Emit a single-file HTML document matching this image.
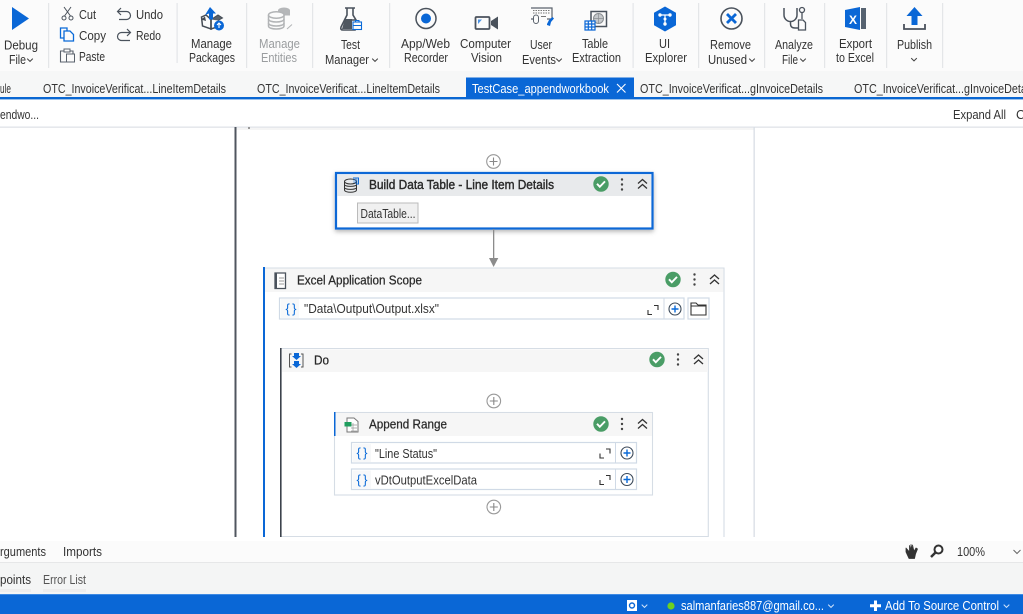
<!DOCTYPE html>
<html><head><meta charset="utf-8"><title>Studio</title>
<style>
html,body{margin:0;padding:0;background:#fff;width:1023px;height:614px;overflow:hidden}
svg{display:block}
text{font-family:"Liberation Sans",sans-serif;font-size:12.5px;fill:#333;}
.s{fill:#444b55}
.b{fill:#0067d6}
.n{fill:none;stroke:#4a525c;stroke-width:1.2}
.nb{fill:none;stroke:#0a6ad8;stroke-width:1.3}
.g text{fill:#9a9d9f}
.w text{fill:#fff}
.sb{stroke:#2a2a2a;stroke-width:.4;fill:#2a2a2a}
</style></head><body>
<svg width="1023" height="614" viewBox="0 0 1023 614" xmlns="http://www.w3.org/2000/svg">
<defs>
<filter id="sh" x="-5%" y="-15%" width="110%" height="135%"><feDropShadow dx="0" dy="2" stdDeviation="2.5" flood-color="#000" flood-opacity=".3"/></filter>
<g id="ok"><circle r="7.7" fill="#4a9d66"/><path d="M-4-.2 -1.2 2.8 4-2.6" fill="none" stroke="#fff" stroke-width="1.9"/></g>
<g id="dots" fill="#444"><circle cy="-5" r="1.2"/><circle r="1.2"/><circle cy="5" r="1.2"/></g>
<g id="chev" fill="none" stroke="#333" stroke-width="1.3"><path d="M-4.5-1 0-5 4.5-1"/><path d="M-4.5 4 0 0 4.5 4"/></g>
<g id="plus"><circle r="6.8" fill="#fff" stroke="#999" stroke-width="1.1"/><path d="M-4 0H4M0-4V4" stroke="#888" stroke-width="1.1"/></g>
<g id="bplus"><circle r="6" fill="#fff" stroke="#3c4a5a" stroke-width="1.1"/><path d="M-3.5 0H3.5M0-3.5V3.5" stroke="#0a6ad8" stroke-width="1.4"/></g>
<g id="exp" fill="none" stroke="#333" stroke-width="1.1"><path d="M-5 0V4.5H-1"/><path d="M1-4.5H5V0"/></g>
<path id="cv" d="M-2.8-1.4 0 1.4 2.8-1.4" fill="none" stroke="#444" stroke-width="1"/>
<path id="cvw" d="M-2.8-1.4 0 1.4 2.8-1.4" fill="none" stroke="#cfe2fa" stroke-width="1"/>
</defs>

<rect width="1023" height="614" fill="#fff"/>
<!-- ribbon -->
<rect width="1023" height="71" fill="#fbfbfb"/>
<rect y="71" width="1023" height="26" fill="#f6f7f7"/>
<rect y="97" width="1023" height="2.4" fill="#0a67d2"/>
<g fill="#e4e6e8">
<rect x="48" y="3" width="1.2" height="65"/><rect x="176.500" y="3" width="1.2" height="60"/><rect x="246" y="3" width="1.2" height="65"/><rect x="312" y="3" width="1.200" height="65"/><rect x="389" y="3" width="1.2" height="65"/><rect x="632.500" y="3" width="1.2" height="65"/><rect x="698" y="3" width="1.2" height="65"/><rect x="764" y="3" width="1.2" height="65"/><rect x="824" y="3" width="1.2" height="65"/><rect x="886" y="3" width="1.2" height="65"/><rect x="942" y="3" width="1.2" height="65"/>
</g>

<!-- ribbon icons -->
<path d="M12 7 29 18.500 12 30Z" fill="#0a67d6"/>
<!-- cut -->
<g fill="none" stroke="#4a525c" stroke-width="1"><path d="M64 7 70.500 16M71 7 64.500 16"/><circle cx="64" cy="18" r="2"/><circle cx="71" cy="18" r="2"/></g>
<!-- copy -->
<path d="M60.500 28H67V38H60.500Z" fill="none" stroke="#0a6ad8" stroke-width="1.300"/>
<path d="M64 31H70L73.500 34.500V41H64Z" fill="#fbfbfb" stroke="#0a6ad8" stroke-width="1.300"/>
<!-- paste -->
<path d="M60.500 51H73V62H60.500Z" fill="none" stroke="#5a626c" stroke-width="1.100"/>
<path d="M64 49H70V52H64Z" fill="#fbfbfb" stroke="#5a626c"/>
<path d="M66.500 54H74.500V62H66.500Z" fill="#fbfbfb" stroke="#5a626c"/>
<!-- undo redo -->
<path d="M121 8 117.500 11.500 121 15M118 11.500H126.500A4 4 0 0 1 126.500 19.500H119" class="n"/>
<path d="M127 29 130.500 32.500 127 36M130 32.500H121.500A4 4 0 0 0 121.500 40.500H130" class="n"/>
<!-- manage packages -->
<path d="M201.500 17 206 15 211 19.500 211 29 202.500 26Z" fill="#fbfbfb" stroke="#454c55" stroke-width="1.500"/>
<path d="M211 19.500 218 15 222.500 18 218 20.500" fill="#5a626c" stroke="#454c55" stroke-width="1"/>
<path d="M211 19.500V29L217 27" fill="none" stroke="#454c55" stroke-width="1.500"/>
<path d="M205 16.500 201 19.500 206 21Z" fill="#454c55"/>
<path d="M210 7 216 13.500H213V19.500H209V13.500L205 15Z" fill="#0a67d6"/>
<circle cx="219" cy="25.500" r="5" fill="#0a67d6"/><path d="M219 28V23.500M217 25 219 23 221 25" stroke="#fff" fill="none" stroke-width="1.100"/>
<!-- entities -->
<ellipse cx="284" cy="10.500" rx="6" ry="3" fill="#b5b7b9"/><rect x="278" y="10.500" width="12" height="5" fill="#b5b7b9"/>
<g fill="#fbfbfb" stroke="#b2b4b6" stroke-width="1.500"><path d="M268.500 15V26C268.500 30 284 30 284 26V15"/><ellipse cx="276.300" cy="15" rx="7.800" ry="3.300"/><path d="M268.500 19C268.500 23 284 23 284 19M268.500 23C268.500 27 284 27 284 23" fill="none"/></g>
<path d="M287 29 292 24.500" stroke="#b2b4b6" fill="none"/>
<!-- test manager -->
<path d="M345 8H355M347 8V15L341 27Q340 30 343 30H355V24" fill="none" stroke="#4a525c" stroke-width="1.600"/>
<path d="M353 8V15L356 20H350" fill="none" stroke="#4a525c" stroke-width="1.600"/>
<path d="M345 19H352V29H342Z" fill="#4f5760"/>
<rect x="353" y="22" width="8.500" height="7.500" fill="#fbfbfb" stroke="#0a6ad8" stroke-width="1.100"/><path d="M353 25.500H361.500M355.500 22V20.500H359V22" stroke="#0a6ad8" fill="none"/>
<!-- recorder -->
<circle cx="426" cy="18.500" r="10" fill="#fbfbfb" stroke="#4a525c" stroke-width="1.500"/><circle cx="426" cy="18.500" r="5" fill="#0a67d6"/>
<!-- camera -->
<rect x="475.500" y="17" width="14" height="12" rx="1" fill="#fbfbfb" stroke="#4a525c" stroke-width="1.800"/><path d="M491 21 498 16.500V29.500L491 25Z" fill="#4a525c"/><path d="M478 24 482 19.500H478Z" fill="#4b93e5"/>
<!-- user events -->
<path d="M531 8H552V19H547M537 19H531Z" fill="none" stroke="#5a626c" stroke-width="1.200"/>
<path d="M533 10.500H550M533 13H550" stroke="#777" stroke-width="1" stroke-dasharray="1.500 1"/><path d="M541 16.500H546" stroke="#777"/>
<rect x="533.500" y="15" width="5" height="8.500" rx="2.500" fill="#fbfbfb" stroke="#5a626c"/>
<path d="M547 24 549 20 552.500 17 554 18.500 551 22 550 26 547 25Z" fill="#0a67d6"/>
<!-- table extraction -->
<rect x="591" y="11.500" width="15.500" height="15" fill="#fbfbfb" stroke="#4a525c" stroke-width="1.500"/>
<circle cx="598.500" cy="18.500" r="5" fill="#c5c8cb" stroke="#8a8e92"/><path d="M593.500 18.500H603.500M598.500 13.500V23.500" stroke="#8a8e92" stroke-width=".7"/>
<rect x="584.500" y="20.500" width="11" height="10" fill="#fbfbfb"/><path d="M585 21H595V30H585ZM585 24H595M585 27H595M588.300 21V30M591.700 21V30" fill="none" stroke="#0a67d6" stroke-width="1.200"/>
<!-- ui explorer -->
<path d="M665 7 675.500 13V25L665 31 654.500 25V13Z" fill="#0a67d6" stroke="#0a67d6" stroke-linejoin="round"/>
<path d="M660 15H670M665 15V24M658.500 15H660M670 15H671.500" stroke="#fff" stroke-width="1.200"/><circle cx="660" cy="15" r="1.700" fill="#fff"/><circle cx="670" cy="15" r="1.700" fill="#fff"/><circle cx="665" cy="19" r="1.500" fill="#fff"/><circle cx="665" cy="24" r="1.700" fill="#fff"/>
<!-- remove unused -->
<circle cx="731.500" cy="18.500" r="10.500" fill="#fbfbfb" stroke="#4a525c" stroke-width="1.600"/><path d="M727 14 736 23M736 14 727 23" stroke="#0a67d6" stroke-width="2.800"/>
<!-- analyze -->
<path d="M784 8V15A6.500 6.500 0 0 0 797 15V8M790.500 21.500V24Q790.500 28 795 28H798" fill="none" stroke="#4a525c" stroke-width="1.500"/>
<circle cx="802" cy="10" r="2.500" fill="none" stroke="#4a525c" stroke-width="1.300"/><path d="M802 12.500V19" stroke="#4a525c" stroke-width="1.300"/>
<path d="M798.500 20H803L805.500 22.500V30H798.500Z" fill="#fbfbfb" stroke="#4a525c" stroke-width="1.300"/>
<!-- excel -->
<path d="M845 10 860 7V30L845 27Z" fill="#0a67d6"/><rect x="861" y="8" width="5" height="21" fill="#566270"/>
<text x="849" y="24" style="font-size:12px;font-weight:bold;fill:#fff">X</text>
<!-- publish -->
<path d="M914.500 7 922.500 16H917.500V25H911.500V16H906.500Z" fill="#0a67d6"/><path d="M904 24V29H925V24" fill="none" stroke="#4a525c" stroke-width="1.800"/>

<!-- ribbon text -->
<text x="4" y="49.500" textLength="34" lengthAdjust="spacingAndGlyphs">Debug</text>
<text x="9" y="64" textLength="17" lengthAdjust="spacingAndGlyphs">File</text><use href="#cv" x="30" y="60"/>
<text x="79" y="19" textLength="17" lengthAdjust="spacingAndGlyphs">Cut</text>
<text x="79" y="40" textLength="27" lengthAdjust="spacingAndGlyphs">Copy</text>
<text x="79" y="61" textLength="26" lengthAdjust="spacingAndGlyphs">Paste</text>
<text x="136" y="19" textLength="27" lengthAdjust="spacingAndGlyphs">Undo</text>
<text x="136" y="40" textLength="25" lengthAdjust="spacingAndGlyphs">Redo</text>
<text x="191" y="48" textLength="41" lengthAdjust="spacingAndGlyphs">Manage</text>
<text x="189" y="62" textLength="46" lengthAdjust="spacingAndGlyphs">Packages</text>
<g class="g"><text x="259" y="48" textLength="41" lengthAdjust="spacingAndGlyphs">Manage</text>
<text x="261" y="62" textLength="36" lengthAdjust="spacingAndGlyphs">Entities</text></g>
<text x="341" y="49" textLength="19" lengthAdjust="spacingAndGlyphs">Test</text>
<text x="325" y="64" textLength="44" lengthAdjust="spacingAndGlyphs">Manager</text><use href="#cv" x="375" y="60"/>
<text x="401" y="48" textLength="49" lengthAdjust="spacingAndGlyphs">App/Web</text>
<text x="404" y="62" textLength="44" lengthAdjust="spacingAndGlyphs">Recorder</text>
<text x="460" y="48" textLength="51" lengthAdjust="spacingAndGlyphs">Computer</text>
<text x="471" y="62" textLength="31" lengthAdjust="spacingAndGlyphs">Vision</text>
<text x="530" y="49" textLength="22" lengthAdjust="spacingAndGlyphs">User</text>
<text x="522" y="64" textLength="34" lengthAdjust="spacingAndGlyphs">Events</text><use href="#cv" x="559" y="60"/>
<text x="582" y="48" textLength="26" lengthAdjust="spacingAndGlyphs">Table</text>
<text x="572" y="62" textLength="49" lengthAdjust="spacingAndGlyphs">Extraction</text>
<text x="659" y="48" textLength="11" lengthAdjust="spacingAndGlyphs">UI</text>
<text x="645" y="62" textLength="42" lengthAdjust="spacingAndGlyphs">Explorer</text>
<text x="710" y="49" textLength="41" lengthAdjust="spacingAndGlyphs">Remove</text>
<text x="708" y="64" textLength="39" lengthAdjust="spacingAndGlyphs">Unused</text><use href="#cv" x="752" y="60"/>
<text x="775" y="49" textLength="38" lengthAdjust="spacingAndGlyphs">Analyze</text>
<text x="782" y="64" textLength="16" lengthAdjust="spacingAndGlyphs">File</text><use href="#cv" x="803" y="60"/>
<text x="839" y="48" textLength="33" lengthAdjust="spacingAndGlyphs">Export</text>
<text x="836" y="62" textLength="38" lengthAdjust="spacingAndGlyphs">to Excel</text>
<text x="897" y="49" textLength="35" lengthAdjust="spacingAndGlyphs">Publish</text><use href="#cv" x="914" y="59.500"/>

<!-- tabs -->
<text x="0" y="93" textLength="11" lengthAdjust="spacingAndGlyphs">ule</text>
<text x="43" y="93" textLength="183" lengthAdjust="spacingAndGlyphs">OTC_InvoiceVerificat...LineItemDetails</text>
<text x="257" y="93" textLength="183" lengthAdjust="spacingAndGlyphs">OTC_InvoiceVerificat...LineItemDetails</text>
<rect x="466" y="77.500" width="168" height="21" fill="#0a67d6"/>
<g class="w"><text x="472" y="93" textLength="137" lengthAdjust="spacingAndGlyphs">TestCase_appendworkbook</text></g>
<path d="M617 84 625.500 92.500M625.500 84 617 92.500" stroke="#fff" stroke-width="1.100"/>
<text x="640" y="93" textLength="183" lengthAdjust="spacingAndGlyphs">OTC_InvoiceVerificat...gInvoiceDetails</text>
<text x="854" y="93" textLength="183" lengthAdjust="spacingAndGlyphs">OTC_InvoiceVerificat...gInvoiceDetails</text>

<!-- toolbar -->
<text x="0" y="119" textLength="39" lengthAdjust="spacingAndGlyphs">endwo...</text>
<text x="953" y="119" textLength="53" lengthAdjust="spacingAndGlyphs">Expand All</text>
<text x="1016" y="119">C</text>
<rect y="126.500" width="1023" height="1.300" fill="#dfe3e8"/>

<!-- canvas -->
<rect x="234.500" y="127" width="2" height="410" fill="#50565f"/>
<rect x="753.500" y="127" width="1.300" height="410" fill="#d8dee5"/>
<rect x="236.500" y="128" width="517" height="2" fill="#f5f5f5"/>
<rect x="248" y="127" width="2" height="2" fill="#999"/>
<use href="#plus" x="493.500" y="161.500"/>

<!-- build data table -->
<rect x="336" y="173" width="316.500" height="55.500" fill="#fff" stroke="#0a67d6" stroke-width="2.200" filter="url(#sh)"/>
<rect x="337.500" y="174.500" width="313.500" height="21.500" fill="#e8eaec"/>
<g fill="none" stroke="#333" stroke-width="1"><ellipse cx="350.500" cy="181.500" rx="6" ry="2.500" fill="#e8eaec"/><path d="M344.500 181.500V190C344.500 193 356.500 193 356.500 190V181.500M344.500 184.500C344.500 187 356.500 187 356.500 184.500M344.500 187.500C344.500 190 356.500 190 356.500 187.500"/></g>
<path d="M353 178H358.500V184H356" fill="none" stroke="#0a6ad8"/><path d="M353 180H358.500M353 182H358.500M356 178V184" stroke="#0a6ad8" stroke-width=".6"/>
<text x="369" y="189" textLength="185" lengthAdjust="spacingAndGlyphs" class="sb">Build Data Table - Line Item Details</text>
<use href="#ok" x="601" y="184"/><use href="#dots" x="622" y="184.500"/><use href="#chev" x="642.500" y="184.500"/>
<rect x="357.500" y="203" width="60.500" height="20" fill="#f0f0f0" stroke="#bbb"/>
<text x="360.500" y="218" textLength="55" lengthAdjust="spacingAndGlyphs">DataTable...</text>

<!-- arrow -->
<rect x="493" y="229" width="1.300" height="31" fill="#8c8c8c"/><path d="M489 258H498.300L493.600 267Z" fill="#8c8c8c"/>

<!-- excel scope -->
<path d="M264 268H724V537" fill="none" stroke="#d6dde5" stroke-width="1.100"/>
<rect x="265" y="268.500" width="458.500" height="23.500" fill="#f6f6f6"/>
<rect x="263" y="267" width="2" height="270" fill="#0a67d6"/>
<path d="M275 273H285.500V288.500H275Z" fill="#fff" stroke="#4a525c" stroke-width="1.300"/><rect x="274.500" y="273" width="2.500" height="15.500" fill="#4a525c"/><path d="M279 278H284M279 281H284M279 284H284" stroke="#777" stroke-width=".8"/>
<text x="297" y="284.500" textLength="125" lengthAdjust="spacingAndGlyphs" class="sb" style="stroke-width:.25">Excel Application Scope</text>
<use href="#ok" x="673" y="279.500"/><use href="#dots" x="694.500" y="279.500"/><use href="#chev" x="714.500" y="280"/>
<rect x="279.500" y="298" width="404.500" height="21" fill="#fff" stroke="#d0dae6" stroke-width="1.200"/>
<rect x="281" y="299" width="18" height="19" fill="#f7f8f9"/>
<path d="M664 298V319" stroke="#d0dae6"/>
<text x="285.500" y="313" style="fill:#0a6ad8;font-size:13px" textLength="11" lengthAdjust="spacing">{}</text>
<text x="304" y="313" textLength="135" lengthAdjust="spacingAndGlyphs">"Data\Output\Output.xlsx"</text>
<use href="#exp" x="653" y="310"/><use href="#bplus" x="675" y="309"/>
<rect x="688" y="298" width="21" height="21" fill="#fff" stroke="#d0dae6" stroke-width="1.200"/>
<path d="M691 303H696L698 305H706V315H691Z" fill="none" stroke="#333" stroke-width="1.100"/><path d="M691 306H706" stroke="#333"/>

<!-- do -->
<path d="M281 348.500H708.300V536.500H281" fill="none" stroke="#d6dde5" stroke-width="1.100"/>
<rect x="282" y="349.500" width="426" height="22.500" fill="#f6f6f6"/>
<rect x="280" y="348" width="1.600" height="189" fill="#3d434c"/>
<path d="M291.500 354H289.500V367H291.500M301 354H303V367H301" fill="none" stroke="#555" stroke-width="1"/>
<path d="M294 353H299V356H301L296.500 360 292 356H294Z" fill="#0a67d6"/><path d="M294 361H299V364H301L296.500 368 292 364H294Z" fill="#0a67d6"/>
<text x="314" y="364.500" textLength="15" lengthAdjust="spacingAndGlyphs" class="sb" style="stroke-width:.25">Do</text>
<use href="#ok" x="657" y="359.500"/><use href="#dots" x="678" y="359.500"/><use href="#chev" x="698.500" y="360"/>
<use href="#plus" x="493.800" y="401"/>

<!-- append range -->
<rect x="334.500" y="412.500" width="318" height="82.500" fill="#fff" stroke="#d6dde5" stroke-width="1.100"/>
<rect x="335" y="413" width="317" height="23" fill="#f6f6f6"/>
<rect x="334" y="412" width="1.500" height="24" fill="#0a67d6"/>
<path d="M347 418H354L358 421.500V432H347Z" fill="#fff" stroke="#777"/><path d="M351 425H357M351 428H357M351 431H357M353 423V432" stroke="#999" stroke-width=".7"/><rect x="344.500" y="422" width="7" height="4.500" fill="#1f9e5e"/>
<text x="369" y="428.500" textLength="78" lengthAdjust="spacingAndGlyphs" class="sb" style="stroke-width:.25">Append Range</text>
<use href="#ok" x="601" y="424"/><use href="#dots" x="622" y="424"/><use href="#chev" x="642.500" y="424.500"/>

<rect x="351.500" y="442.500" width="285" height="20.500" fill="#fff" stroke="#d0dae6" stroke-width="1.200"/><path d="M615.500 442.500V463" stroke="#d0dae6"/>
<rect x="353" y="444" width="18" height="18" fill="#f7f8f9"/>
<text x="356.500" y="457" style="fill:#0a6ad8;font-size:13px" textLength="11" lengthAdjust="spacing">{}</text>
<text x="375" y="458" textLength="62" lengthAdjust="spacingAndGlyphs">"Line Status"</text>
<use href="#exp" x="605" y="453.500"/><use href="#bplus" x="627" y="453"/>

<rect x="351.500" y="469" width="285" height="20.500" fill="#fff" stroke="#d0dae6" stroke-width="1.200"/><path d="M615.500 469V489.500" stroke="#d0dae6"/>
<rect x="353" y="470.500" width="18" height="18" fill="#f7f8f9"/>
<text x="356.500" y="484" style="fill:#0a6ad8;font-size:13px" textLength="11" lengthAdjust="spacing">{}</text>
<text x="375" y="484.500" textLength="102" lengthAdjust="spacingAndGlyphs">vDtOutputExcelData</text>
<use href="#exp" x="605" y="480"/><use href="#bplus" x="627" y="479.500"/>
<use href="#plus" x="493.800" y="507"/>

<!-- bottom bars -->
<rect y="537" width="1023" height="5" fill="#fff"/>
<rect y="541" width="1023" height="21" fill="#fbfbfb"/>
<rect y="562" width="1023" height="1.300" fill="#e6e7e8"/>
<rect y="563" width="1023" height="31" fill="#f4f5f5"/>
<rect y="589" width="31" height="3" fill="#ededed"/><rect x="43" y="589" width="43" height="3" fill="#ededed"/>
<text x="0" y="556" textLength="46" lengthAdjust="spacingAndGlyphs">rguments</text>
<text x="63" y="556" textLength="39" lengthAdjust="spacingAndGlyphs">Imports</text>
<text x="0" y="584" textLength="31" lengthAdjust="spacingAndGlyphs">points</text>
<text x="43" y="584" textLength="43" lengthAdjust="spacingAndGlyphs" style="fill:#555">Error List</text>
<!-- hand -->
<path d="M906 548 909.500 552V545.500L911 551V544.500L912.500 551V545L914 551.500 916 548 917.500 549 915.500 554 914.500 558.500H909L906 552Z" fill="#333" stroke="#333" stroke-width=".8" stroke-linejoin="round"/>
<!-- zoom -->
<circle cx="938.500" cy="549.500" r="4" fill="#fff" stroke="#333" stroke-width="2"/><path d="M935.500 552.500 931 557" stroke="#333" stroke-width="2.500"/>
<text x="957" y="556" textLength="28" lengthAdjust="spacingAndGlyphs">100%</text>
<path d="M1013.500 550 1017 553.500 1020.500 550" fill="none" stroke="#666" stroke-width="1"/>

<!-- status -->
<rect y="594" width="1023" height="20" fill="#0a67d6"/>
<rect y="594" width="1023" height="1" fill="#3e8ae3"/>
<rect x="627" y="600" width="10" height="11" fill="#fff"/><circle cx="632" cy="605.500" r="2.500" fill="none" stroke="#0a67d6" stroke-width="1.400"/>
<use href="#cvw" x="644.500" y="606"/>
<circle cx="671" cy="606" r="3.600" fill="#6dd020"/>
<g class="w"><text x="681" y="610" textLength="143" lengthAdjust="spacingAndGlyphs">salmanfaries887@gmail.co...</text>
<text x="885" y="610" textLength="114" lengthAdjust="spacingAndGlyphs">Add To Source Control</text></g>
<use href="#cvw" x="831" y="606"/>
<path d="M875.500 600.500V611M870 605.800H881" stroke="#fff" stroke-width="3"/>
<use href="#cvw" x="1006.500" y="606"/>
</svg>
</body></html>
